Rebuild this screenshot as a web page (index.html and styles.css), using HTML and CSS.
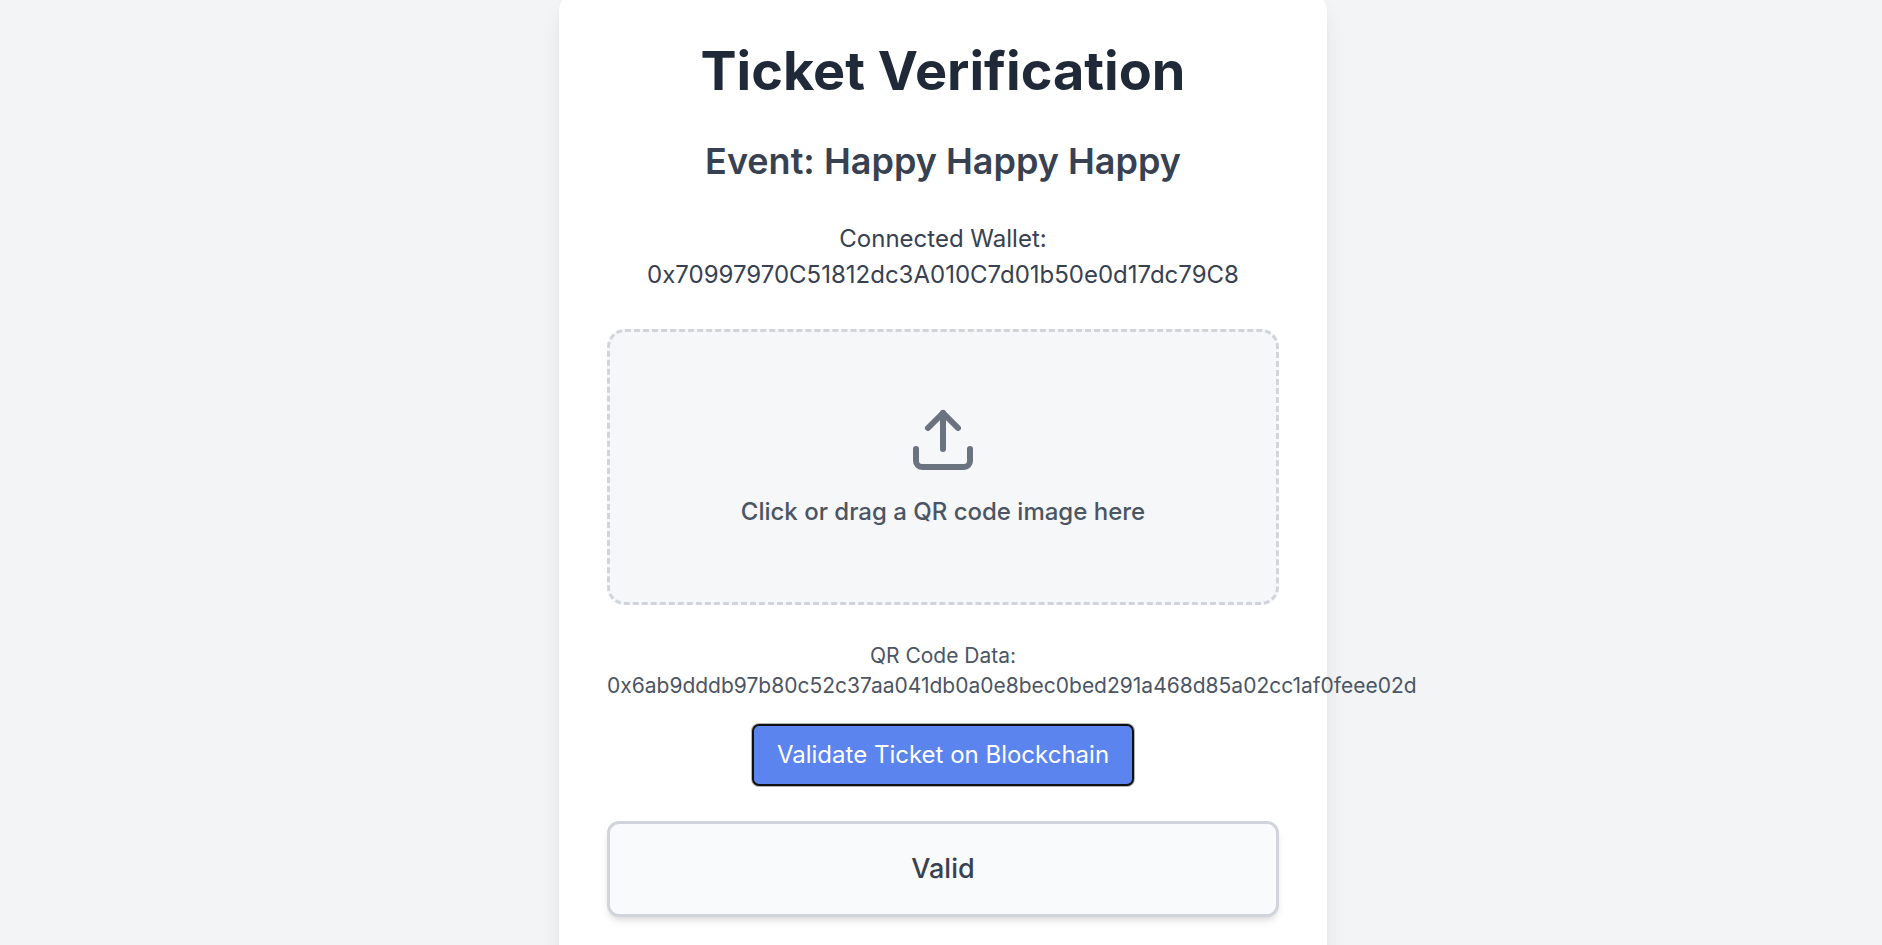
FILE: index.html
```html
<!DOCTYPE html>
<html lang="en">
<head>
    <meta charset="UTF-8">
    <meta name="viewport" content="width=device-width, initial-scale=1.0">
    <title>Ticket Verification</title>
    <link rel="stylesheet" href="styles.css">
</head>
<body>
    <main class="card">
        <h1>Ticket Verification</h1>
        <h2>Event: Happy Happy Happy</h2>
        <p class="wallet">Connected Wallet: 0x70997970C51812dc3A010C7d01b50e0d17dc79C8</p>
        <label class="dropzone" for="qr-file">
            <svg class="upload-icon" viewBox="0 0 24 24" fill="none" stroke="currentColor" stroke-width="2" stroke-linecap="round" stroke-linejoin="round" aria-hidden="true">
                <path d="M21 15v4a2 2 0 0 1-2 2H5a2 2 0 0 1-2-2v-4"/>
                <polyline points="17 8 12 3 7 8"/>
                <line x1="12" y1="3" x2="12" y2="15"/>
            </svg>
            <span>Click or drag a QR code image here</span>
            <input type="file" id="qr-file" accept="image/*" hidden>
        </label>
        <p class="qr-data">QR Code Data: 0x6ab9dddb97b80c52c37aa041db0a0e8bec0bed291a468d85a02cc1af0feee02d</p>
        <button type="button" class="validate">Validate Ticket on Blockchain</button>
        <div class="result">Valid</div>
    </main>
</body>
</html>
```
FILE: styles.css
```css
* {
    box-sizing: border-box;
}
body {
    margin: 0;
    padding-left: 4px;
    min-height: 100vh;
    display: flex;
    justify-content: center;
    align-items: flex-start;
    overflow: hidden;
    background: #f3f4f6;
    font-family: Inter, "Liberation Sans", sans-serif;
}
h1, h2, p {
    margin: 0;
}
.card {
    width: 100%;
    max-width: 768px;
    margin-top: -7px;
    padding: 48px;
    background: #fff;
    border-radius: 18px;
    box-shadow: 0 15px 23px -5px rgba(0, 0, 0, 0.1), 0 6px 9px -6px rgba(0, 0, 0, 0.1);
    text-align: center;
}
h1 {
    margin-bottom: 36px;
    font-size: 54px;
    line-height: 60px;
    font-weight: 700;
    color: #1f2937;
}
h2 {
    margin-bottom: 36px;
    font-size: 36px;
    line-height: 48px;
    font-weight: 600;
    color: #374151;
}
.wallet {
    margin-bottom: 36px;
    font-size: 24px;
    line-height: 36px;
    color: #374151;
}
.dropzone {
    display: flex;
    flex-direction: column;
    align-items: center;
    gap: 18px;
    margin-bottom: 36px;
    padding: 72px;
    border: 3px dashed #d1d5db;
    border-radius: 18px;
    background: #f6f7f9;
    font-size: 24px;
    line-height: 36px;
    font-weight: 500;
    color: #4b5563;
    cursor: pointer;
}
.upload-icon {
    width: 72px;
    height: 72px;
    color: #6b7280;
}
.qr-data {
    margin-bottom: 24px;
    font-size: 21px;
    line-height: 30px;
    color: #4b5563;
}
.validate {
    padding: 12px 24px;
    border: 0;
    border-radius: 6px;
    outline: 2px solid #101010;
    outline-offset: -1px;
    box-shadow: 0 0 0 2px #b4b4b4;
    background: #5b84ee;
    font-family: inherit;
    font-size: 24px;
    line-height: 36px;
    color: #fff;
    cursor: pointer;
}
.result {
    margin-top: 36px;
    padding: 24px;
    border: 3px solid #d1d5db;
    border-radius: 12px;
    background: #f9fafb;
    box-shadow: 0 6px 9px -2px rgba(0, 0, 0, 0.1), 0 3px 6px -3px rgba(0, 0, 0, 0.1);
    font-size: 27px;
    line-height: 42px;
    font-weight: 500;
    color: #374151;
}
```
